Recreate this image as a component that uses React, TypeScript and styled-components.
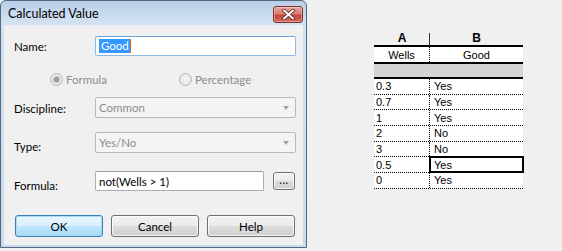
import React from "react";
import styled, { createGlobalStyle } from "styled-components";

const GlobalStyle = createGlobalStyle`
  html, body {
    margin: 0;
    padding: 0;
    background: #f0f0f0;
  }
  body {
    width: 562px;
    height: 251px;
    overflow: hidden;
    font-family: Lato, "Noto Sans", sans-serif;
    font-size: 11.5px;
    color: #000;
  }
`;

const Page = styled.div`
  display: flex;
  align-items: flex-start;
  width: 562px;
  height: 251px;
`;

/* ---------- dialog window ---------- */

const Window = styled.div`
  width: 307px;
  height: 248px;
  box-sizing: border-box;
  border: 1px solid #56677b;
  border-radius: 6px 6px 0 0;
  background: linear-gradient(180deg, #b8cfe8 0px, #cadcef 14px, #d3e2f2 24px, #c9dbee 100%);
  display: flex;
  flex-direction: column;
  padding: 0 3px 2px;
`;

const TitleBar = styled.div`
  height: 24px;
  display: flex;
  align-items: center;
  justify-content: space-between;
  padding-left: 4px;
`;

const Title = styled.span`
  font-size: 12.5px;
  color: #000;
`;

const CloseButton = styled.div`
  width: 30px;
  height: 17px;
  box-sizing: border-box;
  margin-top: 2px;
  border: 1px solid #7e3029;
  border-radius: 3px;
  background: linear-gradient(180deg, #e6a59d 0%, #d77d72 45%, #c2473c 55%, #cf6b5f 100%);
  box-shadow: inset 0 0 0 1px rgba(255, 255, 255, 0.35);
  display: flex;
  align-items: center;
  justify-content: center;
`;

const Client = styled.div`
  flex: 1;
  background: #f0f0f0;
  display: flex;
  flex-direction: column;
`;

const Row = styled.div<{ $top: number; $h: number }>`
  display: flex;
  align-items: center;
  margin-top: ${(p) => p.$top}px;
  height: ${(p) => p.$h}px;
  padding-left: 10px;
`;

const Label = styled.span<{ $drop?: number }>`
  width: 81px;
  flex: none;
  margin-top: ${(p) => p.$drop ?? 0}px;
  color: #000;
`;

const TextBox = styled.div<{ $w: number; $focused?: boolean }>`
  width: ${(p) => p.$w}px;
  height: 20px;
  box-sizing: border-box;
  background: #fff;
  border: 1px solid ${(p) => (p.$focused ? "#8ebbe6" : "#abadb3")};
  border-top-color: ${(p) => (p.$focused ? "#6aa3d8" : "#9a9ca2")};
  border-radius: 2px;
  display: flex;
  align-items: center;
  padding-left: 3px;
`;

const Selected = styled.span`
  background: #3399ff;
  color: #fff;
  padding: 0 1px 0 2px;
  line-height: 14px;
  border-right: 1px solid #d86a1c;
`;

const RadioRow = styled.div`
  display: flex;
  align-items: center;
  margin-top: 16px;
  height: 14px;
  padding-left: 46px;
`;

const RadioItem = styled.div<{ $w?: number }>`
  display: flex;
  align-items: center;
  gap: 3px;
  width: ${(p) => (p.$w ? `${p.$w}px` : "auto")};
  color: #8d8d8d;
`;

const RadioCircle = styled.span<{ $checked?: boolean }>`
  width: 13px;
  height: 13px;
  box-sizing: border-box;
  border-radius: 50%;
  border: 1px solid #b5b5b5;
  background: radial-gradient(circle at 50% 50%, #f4f4f4 0%, #e2e2e2 100%);
  display: flex;
  align-items: center;
  justify-content: center;
  &::after {
    content: "";
    display: ${(p) => (p.$checked ? "block" : "none")};
    width: 5px;
    height: 5px;
    border-radius: 50%;
    background: #9c9c9c;
    box-shadow: 0 0 0 1px #c4c4c4;
  }
`;

const Combo = styled.div`
  width: 201px;
  height: 21px;
  box-sizing: border-box;
  border: 1px solid #b7b9bc;
  border-radius: 2px;
  background: #f4f4f4;
  color: #8d8d8d;
  display: flex;
  align-items: center;
  justify-content: space-between;
  padding: 0 6px 0 3px;
`;

const Arrow = styled.span`
  width: 0;
  height: 0;
  border-left: 3.5px solid transparent;
  border-right: 3.5px solid transparent;
  border-top: 4px solid #a3a3a3;
  margin-top: 1px;
`;

const SmallButton = styled.div`
  width: 22px;
  height: 18px;
  box-sizing: border-box;
  margin-left: 9px;
  border: 1px solid #707070;
  border-radius: 3px;
  background: linear-gradient(180deg, #f2f2f2 0%, #ebebeb 50%, #dcdcdc 51%, #cfcfcf 100%);
  box-shadow: inset 0 0 0 1px rgba(255, 255, 255, 0.7);
  display: flex;
  align-items: center;
  justify-content: center;
  font-size: 11px;
  line-height: 1;
  padding-bottom: 3px;
  letter-spacing: 0.5px;
`;

const ButtonRow = styled.div`
  display: flex;
  gap: 8px;
  margin-top: 24px;
  padding-left: 11px;
`;

const PushButton = styled.div<{ $default?: boolean }>`
  width: 88px;
  height: 22px;
  box-sizing: border-box;
  border: 1px solid ${(p) => (p.$default ? "#3c7fb1" : "#707070")};
  border-radius: 3px;
  background: ${(p) =>
    p.$default
      ? "linear-gradient(180deg, #eaf6fd 0%, #d9f0fc 50%, #bee6fd 51%, #a7d9f5 100%)"
      : "linear-gradient(180deg, #f2f2f2 0%, #ebebeb 50%, #dddddd 51%, #cfcfcf 100%)"};
  box-shadow: inset 0 0 0 1px ${(p) => (p.$default ? "#a8dbf6" : "rgba(255,255,255,0.75)")};
  display: flex;
  align-items: center;
  justify-content: center;
`;

/* ---------- spreadsheet ---------- */

const Sheet = styled.div`
  margin-left: 67px;
  margin-top: 29px;
  width: 149px;
  font-family: "Liberation Sans", Arial, sans-serif;
  font-size: 11px;
`;

const ColumnHeads = styled.div`
  display: grid;
  grid-template-columns: 56px 1fr;
  height: 16px;
  border-bottom: 2px solid #000;
  font-weight: bold;
  font-size: 12px;
`;

const HeadCell = styled.div<{ $divider?: boolean }>`
  display: flex;
  align-items: center;
  justify-content: center;
  padding-top: 2px;
  box-shadow: ${(p) => (p.$divider ? "inset -1px -0px 0 0 #333" : "none")};
  clip-path: inset(4px 0 0 0);
`;

const GridRow = styled.div<{ $h: number; $bg?: string; $line: string }>`
  display: grid;
  grid-template-columns: 56px 1fr;
  height: ${(p) => p.$h}px;
  background: ${(p) => p.$bg ?? "#fff"};
  border-bottom: ${(p) => p.$line};
`;

const Cell = styled.div<{ $align?: string; $divider?: boolean; $active?: boolean; $pad?: number }>`
  display: flex;
  align-items: center;
  justify-content: ${(p) => p.$align ?? "flex-start"};
  padding-left: ${(p) => p.$pad ?? 0}px;
  border-right: ${(p) => (p.$divider ? "1px dotted #000" : "none")};
  box-shadow: ${(p) => (p.$active ? "0 0 0 1px #000, inset 0 0 0 1px #000" : "none")};
  position: ${(p) => (p.$active ? "relative" : "static")};
  white-space: nowrap;
`;

const rows: [string, string][] = [
  ["0.3", "Yes"],
  ["0.7", "Yes"],
  ["1", "Yes"],
  ["2", "No"],
  ["3", "No"],
  ["0.5", "Yes"],
  ["0", "Yes"],
];

const CloseGlyph = () => (
  <svg width="13" height="11" viewBox="0 0 13 11">
    <path d="M2 1.5 L11 9.5 M11 1.5 L2 9.5" stroke="#5a1f1a" strokeWidth="3.6" strokeLinecap="round" />
    <path d="M2 1.5 L11 9.5 M11 1.5 L2 9.5" stroke="#ffffff" strokeWidth="2" strokeLinecap="round" />
  </svg>
);

export default function App() {
  return (
    <>
      <GlobalStyle />
      <Page>
        <Window>
          <TitleBar>
            <Title>Calculated Value</Title>
            <CloseButton>
              <CloseGlyph />
            </CloseButton>
          </TitleBar>
          <Client>
            <Row $top={11} $h={20}>
              <Label>Name:</Label>
              <TextBox $w={201} $focused>
                <Selected>Good</Selected>
              </TextBox>
            </Row>
            <RadioRow>
              <RadioItem $w={129}>
                <RadioCircle $checked />
                Formula
              </RadioItem>
              <RadioItem>
                <RadioCircle />
                Percentage
              </RadioItem>
            </RadioRow>
            <Row $top={11} $h={21}>
              <Label $drop={2}>Discipline:</Label>
              <Combo>
                Common
                <Arrow />
              </Combo>
            </Row>
            <Row $top={14} $h={21}>
              <Label $drop={8}>Type:</Label>
              <Combo>
                Yes/No
                <Arrow />
              </Combo>
            </Row>
            <Row $top={18} $h={20}>
              <Label $drop={8}>Formula:</Label>
              <TextBox $w={169}>not(Wells &gt; 1)</TextBox>
              <SmallButton>...</SmallButton>
            </Row>
            <ButtonRow>
              <PushButton $default>OK</PushButton>
              <PushButton>Cancel</PushButton>
              <PushButton>Help</PushButton>
            </ButtonRow>
          </Client>
        </Window>

        <Sheet>
          <ColumnHeads>
            <HeadCell $divider>A</HeadCell>
            <HeadCell>B</HeadCell>
          </ColumnHeads>
          <GridRow $h={15} $line="2px solid #000">
            <Cell $align="center" $divider>Wells</Cell>
            <Cell $align="center">Good</Cell>
          </GridRow>
          <GridRow $h={13} $bg="#d4d4d4" $line="2px solid #000">
            <Cell />
            <Cell />
          </GridRow>
          {rows.map(([a, b], i) => (
            <GridRow key={i} $h={14.7} $line="1px dotted #000">
              <Cell $divider $pad={2}>{a}</Cell>
              <Cell $pad={4} $active={i === 5}>{b}</Cell>
            </GridRow>
          ))}
        </Sheet>
      </Page>
    </>
  );
}
